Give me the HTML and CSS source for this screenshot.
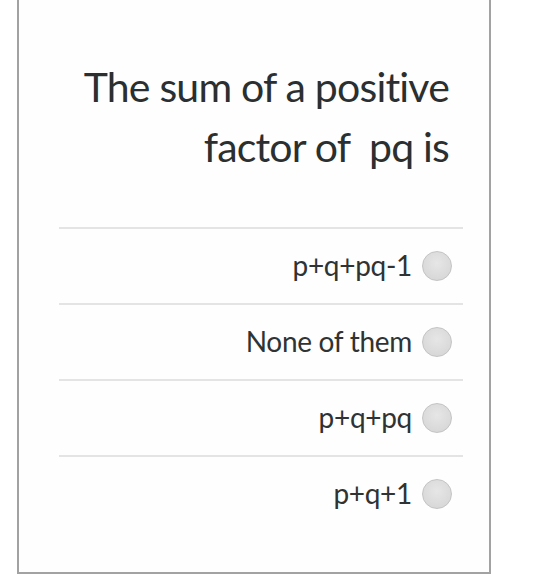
FILE: index.html
```html
<!DOCTYPE html>
<html>
<head>
<meta charset="utf-8">
<link rel="stylesheet" href="styles.css">
</head>
<body>
<div class="card">
  <h1 class="question">The sum of a positive<br>factor of&nbsp; pq is</h1>
  <ul class="options">
    <li class="option"><span class="label">p+q+pq-1</span><span class="radio"></span></li>
    <li class="option"><span class="label">None of them</span><span class="radio"></span></li>
    <li class="option"><span class="label">p+q+pq</span><span class="radio"></span></li>
    <li class="option"><span class="label">p+q+1</span><span class="radio"></span></li>
  </ul>
</div>
</body>
</html>
```

FILE: styles.css
```css
html, body {
  margin: 0;
  padding: 0;
  background: #ffffff;
}
body {
  font-family: Lato, "Open Sans", sans-serif;
  color: #2e3233;
}
.card {
  box-sizing: border-box;
  margin-left: 17px;
  width: 474px;
  height: 574px;
  border: 2px solid #a2a2a2;
  border-top: none;
  background: #fefefe;
}
.question {
  margin: 0;
  padding: 57px 40px 0 0;
  text-align: right;
  font-weight: 400;
  font-size: 41px;
  letter-spacing: -0.8px;
  line-height: 60px;
  color: #2b2f30;
}
.options {
  list-style: none;
  margin: 50px 26px 0 40px;
  padding: 0;
}
.option {
  display: flex;
  align-items: center;
  justify-content: flex-end;
  gap: 10px;
  height: 76px;
  box-sizing: border-box;
  border-top: 2px solid #e4e4e4;
  padding: 0 11px 0 0;
}
.label {
  font-size: 28px;
  letter-spacing: -0.3px;
  color: #2f3334;
  padding-bottom: 3px;
}
.radio {
  width: 28px;
  height: 28px;
  border-radius: 50%;
  border: 1px solid #c4c4c4;
  background: radial-gradient(circle at 50% 40%, #e6e6e6 0%, #d9d9d9 70%, #cfcfcf 100%);
}
```
